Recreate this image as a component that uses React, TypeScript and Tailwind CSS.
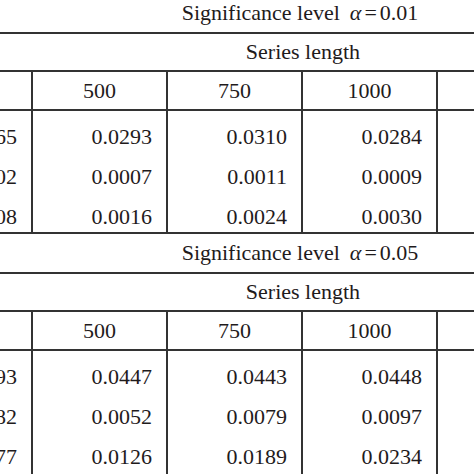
const serif = { fontFamily: '"Liberation Serif", "Times New Roman", serif' };

type Section = {
  alpha: string;
  rows: string[][];
};

const lengths = ['250', '500', '750', '1000', '2000', '5000'];

const sections: Section[] = [
  {
    alpha: '0.01',
    rows: [
      ['0.0265', '0.0293', '0.0310', '0.0284', '0.0301', '0.0297'],
      ['0.0002', '0.0007', '0.0011', '0.0009', '0.0012', '0.0010'],
      ['0.0008', '0.0016', '0.0024', '0.0030', '0.0036', '0.0041'],
    ],
  },
  {
    alpha: '0.05',
    rows: [
      ['0.0493', '0.0447', '0.0443', '0.0448', '0.0462', '0.0471'],
      ['0.0082', '0.0052', '0.0079', '0.0097', '0.0104', '0.0113'],
      ['0.0077', '0.0126', '0.0189', '0.0234', '0.0262', '0.0288'],
    ],
  },
];

function TableSection({ section, dataHeight }: { section: Section; dataHeight: string }) {
  return (
    <div>
      {/* Significance level row */}
      <div className="h-[40px] flex items-center justify-center border-b-2 border-[#333] pr-[6px]">
        <span>
          Significance level
          <span className="italic ml-[10px]">α</span>
          <span className="mx-[3px]">=</span>
          {section.alpha}
        </span>
      </div>

      {/* Series length row */}
      <div className="h-[38px] flex items-center justify-center border-b-2 border-[#333]">
        Series length
      </div>

      {/* Column headers */}
      <div className="grid grid-cols-[repeat(6,135px)] h-[39px] border-b-2 border-[#333]">
        {lengths.map((n) => (
          <div key={n} className="flex items-center justify-center border-r-2 border-[#333]">
            {n}
          </div>
        ))}
      </div>

      {/* Values */}
      <div className={`grid grid-cols-[repeat(6,135px)] ${dataHeight} overflow-hidden border-b-2 border-[#333]`}>
        {lengths.map((n, c) => (
          <div key={n} className="flex flex-col items-end pt-[6px] pr-[14px] border-r-2 border-[#333]">
            {section.rows.map((r, i) => (
              <div key={i} className="h-[40px] shrink-0 flex items-center">
                {r[c]}
              </div>
            ))}
          </div>
        ))}
      </div>
    </div>
  );
}

export default function App() {
  return (
    <main className="w-[474px] h-[474px] overflow-hidden bg-white text-[#1f1b1c]" style={serif}>
      <div className="w-[810px] -ml-[102px] -mt-[6px] text-[22px] leading-none">
        <TableSection section={sections[0]} dataHeight="h-[123px]" />
        <TableSection section={sections[1]} dataHeight="h-[130px]" />
      </div>
    </main>
  );
}
